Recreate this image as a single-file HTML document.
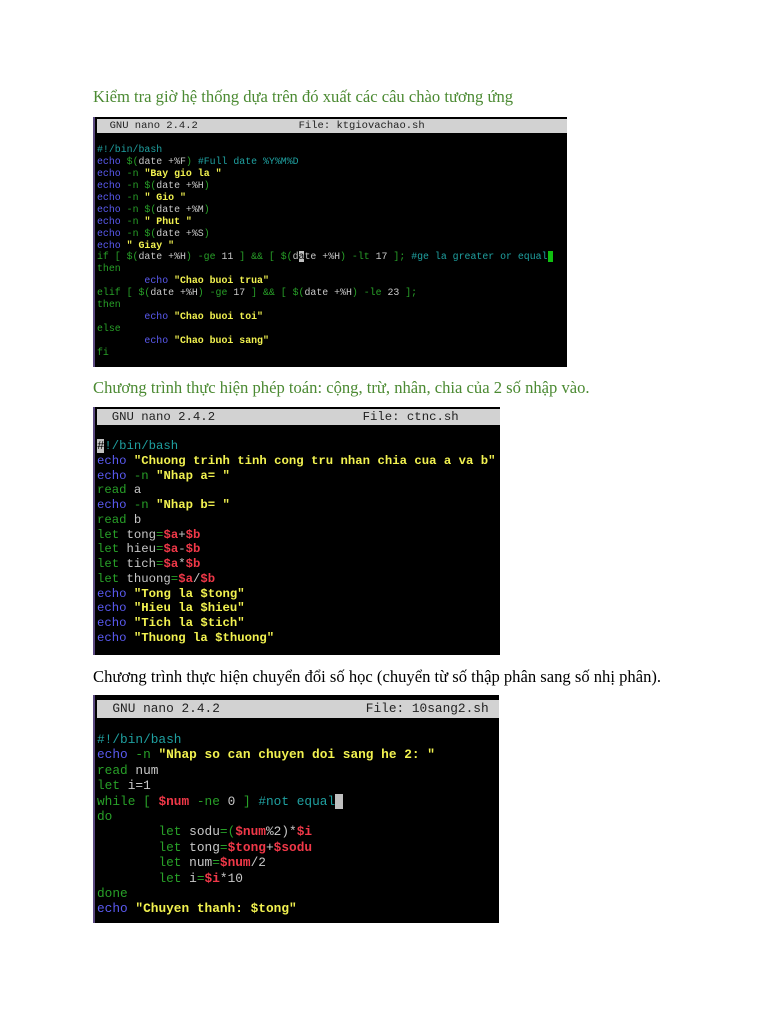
<!DOCTYPE html>
<html><head><meta charset="utf-8"><style>
body{margin:0;background:#fff;width:768px;height:1024px;position:relative;overflow:hidden}
.h{position:absolute;left:93px;font-family:"Liberation Serif",serif;font-size:16.6px;white-space:nowrap}
.g{color:#4b8a32}
.t{position:absolute;background:#000;border-left:2px solid #5a4a80;box-sizing:border-box;overflow:hidden}
.tb{position:absolute;left:2px;right:0;background:#d2d2d2;color:#222;font-family:"Liberation Mono",monospace;white-space:pre}
pre{position:absolute;left:2px;margin:0;font-family:"Liberation Mono","DejaVu Sans Mono",monospace;color:#c8c8c8}
.e{color:#5a5af0}.k{color:#28a028}.s{color:#f2f250;font-weight:bold}.c{color:#1fa0a0}.r{color:#f03848;font-weight:bold}
.cur{background:#c0c0c0;color:#000}.gc{background:#10c010}
</style></head><body>
<div class="h g" style="top:87px">Kiểm tra giờ hệ thống dựa trên đó xuất các câu chào tương ứng</div>
<div class="t" style="left:93px;top:117px;width:474px;height:250px">
<div class="tb" style="top:2px;height:14px;font-size:10.5px;line-height:14px">  GNU nano 2.4.2                File: ktgiovachao.sh</div>
<pre style="top:27px;font-size:9.9px;line-height:11.94px"><span class="c">#!/bin/bash</span>
<span class="e">echo</span> <span class="k">$(</span>date +%F<span class="k">)</span> <span class="c">#Full date %Y%M%D</span>
<span class="e">echo</span> <span class="k">-n</span> <span class="s">"Bay gio la "</span>
<span class="e">echo</span> <span class="k">-n $(</span>date +%H<span class="k">)</span>
<span class="e">echo</span> <span class="k">-n</span> <span class="s">" Gio "</span>
<span class="e">echo</span> <span class="k">-n $(</span>date +%M<span class="k">)</span>
<span class="e">echo</span> <span class="k">-n</span> <span class="s">" Phut "</span>
<span class="e">echo</span> <span class="k">-n $(</span>date +%S<span class="k">)</span>
<span class="e">echo</span> <span class="s">" Giay "</span>
<span class="k">if [ $(</span>date +%H<span class="k">) -ge</span> 11 <span class="k">] &amp;&amp; [ $(</span>d<span class="cur">a</span>te +%H<span class="k">) -lt</span> 17 <span class="k">];</span> <span class="c">#ge la greater or equal</span><span class="gc"> </span>
<span class="k">then</span>
        <span class="e">echo</span> <span class="s">"Chao buoi trua"</span>
<span class="k">elif [ $(</span>date +%H<span class="k">) -ge</span> 17 <span class="k">] &amp;&amp; [ $(</span>date +%H<span class="k">) -le</span> 23 <span class="k">];</span>
<span class="k">then</span>
        <span class="e">echo</span> <span class="s">"Chao buoi toi"</span>
<span class="k">else</span>
        <span class="e">echo</span> <span class="s">"Chao buoi sang"</span>
<span class="k">fi</span></pre>
</div>
<div class="h g" style="top:378px">Chương trình thực hiện phép toán: cộng, trừ, nhân, chia của 2 số nhập vào.</div>
<div class="t" style="left:93px;top:407px;width:407px;height:248px">
<div class="tb" style="top:2px;height:16px;font-size:12.3px;line-height:16px">  GNU nano 2.4.2                    File: ctnc.sh</div>
<pre style="top:32px;font-size:12.3px;line-height:14.77px"><span class="c"><span class="cur">#</span>!/bin/bash</span>
<span class="e">echo</span> <span class="s">"Chuong trinh tinh cong tru nhan chia cua a va b"</span>
<span class="e">echo</span> <span class="k">-n</span> <span class="s">"Nhap a= "</span>
<span class="k">read</span> a
<span class="e">echo</span> <span class="k">-n</span> <span class="s">"Nhap b= "</span>
<span class="k">read</span> b
<span class="k">let</span> tong<span class="k">=</span><span class="r">$a</span>+<span class="r">$b</span>
<span class="k">let</span> hieu<span class="k">=</span><span class="r">$a</span>-<span class="r">$b</span>
<span class="k">let</span> tich<span class="k">=</span><span class="r">$a</span>*<span class="r">$b</span>
<span class="k">let</span> thuong<span class="k">=</span><span class="r">$a</span>/<span class="r">$b</span>
<span class="e">echo</span> <span class="s">"Tong la $tong"</span>
<span class="e">echo</span> <span class="s">"Hieu la $hieu"</span>
<span class="e">echo</span> <span class="s">"Tich la $tich"</span>
<span class="e">echo</span> <span class="s">"Thuong la $thuong"</span></pre>
</div>
<div class="h" style="top:667px;color:#000">Chương trình thực hiện chuyển đổi số học (chuyển từ số thập phân sang số nhị phân).</div>
<div class="t" style="left:93px;top:695px;width:406px;height:228px">
<div class="tb" style="top:5px;height:18px;font-size:12.8px;line-height:18px">  GNU nano 2.4.2                   File: 10sang2.sh</div>
<pre style="top:37px;font-size:12.8px;line-height:15.4px"><span class="c">#!/bin/bash</span>
<span class="e">echo</span> <span class="k">-n</span> <span class="s">"Nhap so can chuyen doi sang he 2: "</span>
<span class="k">read</span> num
<span class="k">let</span> i=1
<span class="k">while [</span> <span class="r">$num</span> <span class="k">-ne</span> 0 <span class="k">]</span> <span class="c">#not equal</span><span class="cur"> </span>
<span class="k">do</span>
        <span class="k">let</span> sodu<span class="k">=(</span><span class="r">$num</span>%2)*<span class="r">$i</span>
        <span class="k">let</span> tong<span class="k">=</span><span class="r">$tong</span>+<span class="r">$sodu</span>
        <span class="k">let</span> num<span class="k">=</span><span class="r">$num</span>/2
        <span class="k">let</span> i<span class="k">=</span><span class="r">$i</span>*10
<span class="k">done</span>
<span class="e">echo</span> <span class="s">"Chuyen thanh: $tong"</span></pre>
</div>
</body></html>
